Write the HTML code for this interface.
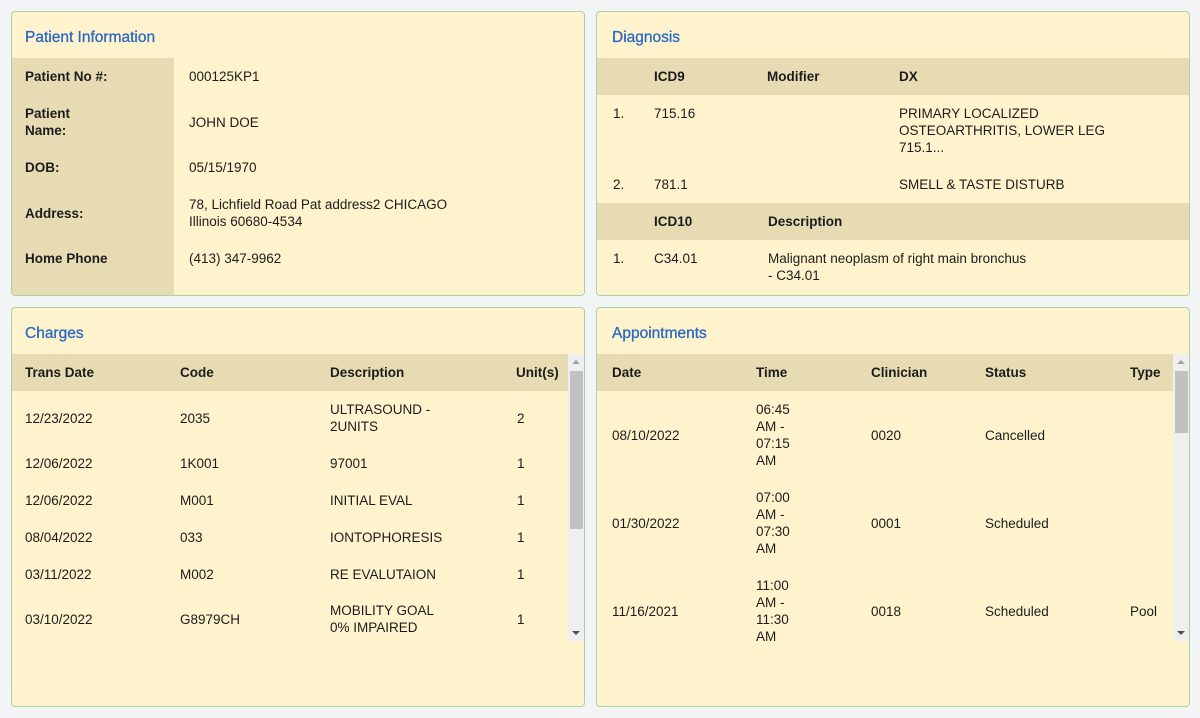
<!DOCTYPE html>
<html><head><meta charset="utf-8"><style>
*{margin:0;padding:0;box-sizing:border-box}
body{width:1200px;height:718px;background:#f3f4f6;font-family:"Liberation Sans",Arial,sans-serif;font-size:13.5px;color:#1c1c1c;position:relative;overflow:hidden}
.p{position:absolute;background:#fff3cd;border:1px solid #a9d3a4;border-radius:4px;overflow:hidden}
.t{position:absolute;color:#2b69c4;font-size:15.5px;font-weight:500;-webkit-text-stroke:0.3px #2b69c4}
.b{position:absolute;background:#e7dbb4}
.x{position:absolute;line-height:17px;white-space:nowrap}
.h{font-weight:bold}
.sb{position:absolute;background:#efefef;width:16px}
.th{position:absolute;background:#c1c1c1;left:2px;width:13px}
.up,.dn{position:absolute;left:4px;width:0;height:0;border-left:4px solid transparent;border-right:4px solid transparent}
.up{top:6px;border-bottom:4px solid #a3a3a3}
.dn{bottom:6px;border-top:4px solid #505050}
</style></head><body>
<div class="p" style="left:11px;top:11px;width:574px;height:285px">
<div class="t" style="left:13px;top:17px">Patient Information</div>
<div class="b" style="left:0;top:46px;width:162px;height:239px"></div>
<div class="x h" style="left:13px;top:56px">Patient No #:</div><div class="x" style="left:177px;top:56px">000125KP1</div>
<div class="x h" style="left:13px;top:93px">Patient<br>Name:</div><div class="x" style="left:177px;top:102px">JOHN DOE</div>
<div class="x h" style="left:13px;top:147px">DOB:</div><div class="x" style="left:177px;top:147px">05/15/1970</div>
<div class="x h" style="left:13px;top:193px">Address:</div><div class="x" style="left:177px;top:184px">78, Lichfield Road Pat address2 CHICAGO<br>Illinois 60680-4534</div>
<div class="x h" style="left:13px;top:238px">Home Phone</div><div class="x" style="left:177px;top:238px">(413) 347-9962</div>
</div>
<div class="p" style="left:596px;top:11px;width:594px;height:285px">
<div class="t" style="left:15px;top:17px">Diagnosis</div>
<div class="b" style="left:0;top:46px;width:594px;height:37px"></div>
<div class="x h" style="left:57px;top:56px">ICD9</div><div class="x h" style="left:170px;top:56px">Modifier</div><div class="x h" style="left:302px;top:56px">DX</div>
<div class="x" style="left:16px;top:93px">1.</div><div class="x" style="left:57px;top:93px">715.16</div><div class="x" style="left:302px;top:93px">PRIMARY LOCALIZED<br>OSTEOARTHRITIS, LOWER LEG<br>715.1...</div>
<div class="x" style="left:16px;top:164px">2.</div><div class="x" style="left:57px;top:164px">781.1</div><div class="x" style="left:302px;top:164px">SMELL &amp; TASTE DISTURB</div>
<div class="b" style="left:0;top:191px;width:594px;height:37px"></div>
<div class="x h" style="left:57px;top:201px">ICD10</div><div class="x h" style="left:171px;top:201px">Description</div>
<div class="x" style="left:16px;top:238px">1.</div><div class="x" style="left:57px;top:238px">C34.01</div><div class="x" style="left:171px;top:238px">Malignant neoplasm of right main bronchus<br>- C34.01</div>
</div>
<div class="p" style="left:11px;top:307px;width:574px;height:400px">
<div class="t" style="left:13px;top:17px">Charges</div>
<div class="b" style="left:0;top:46px;width:556px;height:37px"></div>
<div class="x h" style="left:13px;top:56px">Trans Date</div><div class="x h" style="left:168px;top:56px">Code</div><div class="x h" style="left:318px;top:56px">Description</div><div class="x h" style="left:504px;top:56px">Unit(s)</div>
<div class="x" style="left:13px;top:102px">12/23/2022</div><div class="x" style="left:168px;top:102px">2035</div><div class="x" style="left:318px;top:93px">ULTRASOUND -<br>2UNITS</div><div class="x" style="left:505px;top:102px">2</div>
<div class="x" style="left:13px;top:147px">12/06/2022</div><div class="x" style="left:168px;top:147px">1K001</div><div class="x" style="left:318px;top:147px">97001</div><div class="x" style="left:505px;top:147px">1</div>
<div class="x" style="left:13px;top:184px">12/06/2022</div><div class="x" style="left:168px;top:184px">M001</div><div class="x" style="left:318px;top:184px">INITIAL EVAL</div><div class="x" style="left:505px;top:184px">1</div>
<div class="x" style="left:13px;top:221px">08/04/2022</div><div class="x" style="left:168px;top:221px">033</div><div class="x" style="left:318px;top:221px">IONTOPHORESIS</div><div class="x" style="left:505px;top:221px">1</div>
<div class="x" style="left:13px;top:258px">03/11/2022</div><div class="x" style="left:168px;top:258px">M002</div><div class="x" style="left:318px;top:258px">RE EVALUTAION</div><div class="x" style="left:505px;top:258px">1</div>
<div class="x" style="left:13px;top:303px">03/10/2022</div><div class="x" style="left:168px;top:303px">G8979CH</div><div class="x" style="left:318px;top:294px">MOBILITY GOAL<br>0% IMPAIRED</div><div class="x" style="left:505px;top:303px">1</div>
<div class="sb" style="left:556px;top:46px;height:287px"><div class="up"></div><div class="th" style="top:17px;height:158px"></div><div class="dn"></div></div>
</div>
<div class="p" style="left:596px;top:307px;width:594px;height:400px">
<div class="t" style="left:15px;top:17px">Appointments</div>
<div class="b" style="left:0;top:46px;width:576px;height:37px"></div>
<div class="x h" style="left:15px;top:56px">Date</div><div class="x h" style="left:159px;top:56px">Time</div><div class="x h" style="left:274px;top:56px">Clinician</div><div class="x h" style="left:388px;top:56px">Status</div><div class="x h" style="left:533px;top:56px">Type</div>
<div class="x" style="left:15px;top:119px">08/10/2022</div><div class="x" style="left:159px;top:93px">06:45<br>AM -<br>07:15<br>AM</div><div class="x" style="left:274px;top:119px">0020</div><div class="x" style="left:388px;top:119px">Cancelled</div>
<div class="x" style="left:15px;top:207px">01/30/2022</div><div class="x" style="left:159px;top:181px">07:00<br>AM -<br>07:30<br>AM</div><div class="x" style="left:274px;top:207px">0001</div><div class="x" style="left:388px;top:207px">Scheduled</div>
<div class="x" style="left:15px;top:295px">11/16/2021</div><div class="x" style="left:159px;top:269px">11:00<br>AM -<br>11:30<br>AM</div><div class="x" style="left:274px;top:295px">0018</div><div class="x" style="left:388px;top:295px">Scheduled</div><div class="x" style="left:533px;top:295px">Pool</div>
<div class="sb" style="left:576px;top:46px;height:287px"><div class="up"></div><div class="th" style="top:17px;height:62px"></div><div class="dn"></div></div>
</div>
</body></html>
